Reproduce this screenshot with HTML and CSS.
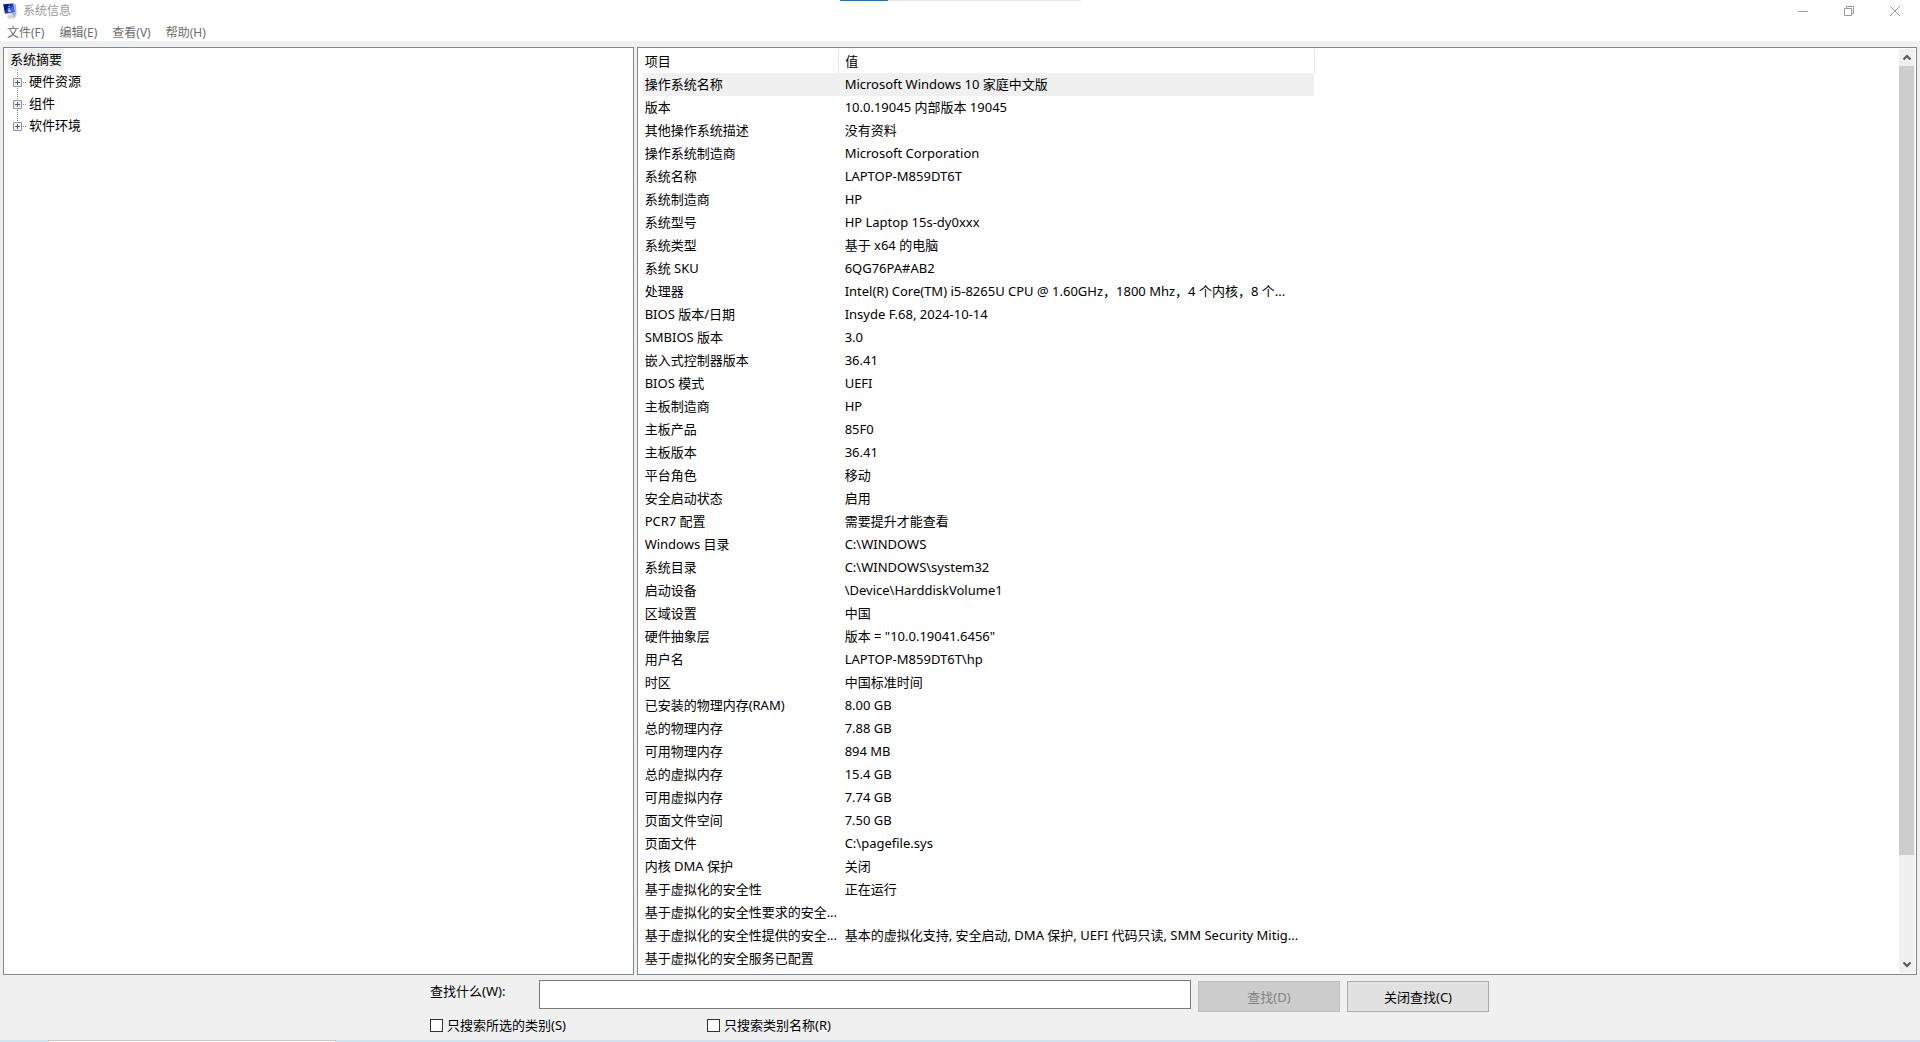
FILE: index.html
```html
<!DOCTYPE html>
<html lang="zh-CN">
<head>
<meta charset="utf-8">
<title>系统信息</title>
<link rel="stylesheet" href="styles.css">
</head>
<body>
<div class="window">
  <div class="progress"><span class="progress-fill"></span></div>
  <header class="titlebar">
    <svg class="app-icon" width="15" height="16" viewBox="0 0 15 16" aria-hidden="true">
      <path d="M5 12 L10 11 L13 13 L12 15 L6 16 L4 14 Z" fill="#d3d5da"/>
      <path d="M10 0.500 L13 1.500 L13.500 11 L11.500 14 L9 11 Z" fill="#a3b0d8"/>
      <path d="M0 1 L11 0 L12.500 10 L2 11.500 Z" fill="#b9c3e2"/>
      <path d="M0.500 1.500 L10 0.500 L11.500 9 L2 10.500 Z" fill="#2038b8"/>
      <path d="M0.500 1.500 L6 1 L4 6 L1.500 8 Z" fill="#0b1a78"/>
      <path d="M8 4 L11 3 L11.500 9 L5 10 Z" fill="#3f6ae0"/>
      <path d="M6 3v1M6 5v3M5 8h3" stroke="#e8efff" stroke-width="1" fill="none"/>
    </svg>
    <h1 class="title">系统信息</h1>
    <div class="caption-buttons">
      <button class="caption" aria-label="最小化"><svg width="12" height="12" viewBox="0 0 12 12"><path d="M1 6.500H11" stroke="#999" fill="none"/></svg></button>
      <button class="caption" aria-label="向下还原"><svg width="12" height="12" viewBox="0 0 12 12"><path d="M1.500 3.500H8.500V10.500H1.500ZM3.500 3V1.500H10.500V8.500H9" stroke="#999" fill="none"/></svg></button>
      <button class="caption" aria-label="关闭"><svg width="12" height="12" viewBox="0 0 12 12"><path d="M1 1L11 11M11 1L1 11" stroke="#999" fill="none"/></svg></button>
    </div>
  </header>
  <nav class="menubar">
    <button class="menu">文件(F)</button>
    <button class="menu">编辑(E)</button>
    <button class="menu">查看(V)</button>
    <button class="menu">帮助(H)</button>
  </nav>
  <main class="panes">
    <section class="pane tree-pane">
      <div class="tree-root">系统摘要</div>
      <ul class="tree">
        <li class="node"><button class="expander" aria-label="展开硬件资源"></button>硬件资源</li>
        <li class="node"><button class="expander" aria-label="展开组件"></button>组件</li>
        <li class="node"><button class="expander" aria-label="展开软件环境"></button>软件环境</li>
      </ul>
    </section>
    <section class="pane list-pane">
      <div class="list-area">
        <table class="list">
          <colgroup><col class="col-item"><col class="col-value"></colgroup>
          <thead><tr><th>项目</th><th>值</th></tr></thead>
          <tbody>
            <tr class="selected"><td>操作系统名称</td><td>Microsoft Windows 10 家庭中文版</td></tr>
            <tr><td>版本</td><td>10.0.19045 内部版本 19045</td></tr>
            <tr><td>其他操作系统描述</td><td>没有资料</td></tr>
            <tr><td>操作系统制造商</td><td>Microsoft Corporation</td></tr>
            <tr><td>系统名称</td><td>LAPTOP-M859DT6T</td></tr>
            <tr><td>系统制造商</td><td>HP</td></tr>
            <tr><td>系统型号</td><td>HP Laptop 15s-dy0xxx</td></tr>
            <tr><td>系统类型</td><td>基于 x64 的电脑</td></tr>
            <tr><td>系统 SKU</td><td>6QG76PA#AB2</td></tr>
            <tr><td>处理器</td><td>Intel(R) Core(TM) i5-8265U CPU @ 1.60GHz，1800 Mhz，4 个内核，8 个...</td></tr>
            <tr><td>BIOS 版本/日期</td><td>Insyde F.68, 2024-10-14</td></tr>
            <tr><td>SMBIOS 版本</td><td>3.0</td></tr>
            <tr><td>嵌入式控制器版本</td><td>36.41</td></tr>
            <tr><td>BIOS 模式</td><td>UEFI</td></tr>
            <tr><td>主板制造商</td><td>HP</td></tr>
            <tr><td>主板产品</td><td>85F0</td></tr>
            <tr><td>主板版本</td><td>36.41</td></tr>
            <tr><td>平台角色</td><td>移动</td></tr>
            <tr><td>安全启动状态</td><td>启用</td></tr>
            <tr><td>PCR7 配置</td><td>需要提升才能查看</td></tr>
            <tr><td>Windows 目录</td><td>C:\WINDOWS</td></tr>
            <tr><td>系统目录</td><td>C:\WINDOWS\system32</td></tr>
            <tr><td>启动设备</td><td>\Device\HarddiskVolume1</td></tr>
            <tr><td>区域设置</td><td>中国</td></tr>
            <tr><td>硬件抽象层</td><td>版本 = "10.0.19041.6456"</td></tr>
            <tr><td>用户名</td><td>LAPTOP-M859DT6T\hp</td></tr>
            <tr><td>时区</td><td>中国标准时间</td></tr>
            <tr><td>已安装的物理内存(RAM)</td><td>8.00 GB</td></tr>
            <tr><td>总的物理内存</td><td>7.88 GB</td></tr>
            <tr><td>可用物理内存</td><td>894 MB</td></tr>
            <tr><td>总的虚拟内存</td><td>15.4 GB</td></tr>
            <tr><td>可用虚拟内存</td><td>7.74 GB</td></tr>
            <tr><td>页面文件空间</td><td>7.50 GB</td></tr>
            <tr><td>页面文件</td><td>C:\pagefile.sys</td></tr>
            <tr><td>内核 DMA 保护</td><td>关闭</td></tr>
            <tr><td>基于虚拟化的安全性</td><td>正在运行</td></tr>
            <tr><td>基于虚拟化的安全性要求的安全...</td><td></td></tr>
            <tr><td>基于虚拟化的安全性提供的安全...</td><td>基本的虚拟化支持, 安全启动, DMA 保护, UEFI 代码只读, SMM Security Mitig...</td></tr>
            <tr><td>基于虚拟化的安全服务已配置</td><td></td></tr>
          </tbody>
        </table>
      </div>
      <div class="scrollbar">
        <button class="scroll-arrow" aria-label="向上滚动"><svg width="8" height="7" viewBox="0 0 8 7"><path d="M0.500 5.500L4 2L7.500 5.500" fill="none" stroke="#555" stroke-width="2"/></svg></button>
        <div class="thumb"></div>
        <div class="track"></div>
        <button class="scroll-arrow" aria-label="向下滚动"><svg width="8" height="7" viewBox="0 0 8 7"><path d="M0.500 1.500L4 5L7.500 1.500" fill="none" stroke="#555" stroke-width="2"/></svg></button>
      </div>
    </section>
  </main>
  <form class="find">
    <div class="find-row">
      <label class="find-label" for="what">查找什么(W):</label>
      <input class="find-input" id="what" type="text">
      <button class="push" type="button" disabled>查找(D)</button>
      <button class="push" type="button">关闭查找(C)</button>
    </div>
    <div class="option-row">
      <label class="option"><input class="check" type="checkbox">只搜索所选的类别(S)</label>
      <label class="option"><input class="check" type="checkbox">只搜索类别名称(R)</label>
    </div>
  </form>
  <footer class="edge"><span class="edge-tab"></span></footer>
</div>
</body>
</html>
```
FILE: styles.css
```css
* {
  box-sizing: border-box;
}

body {
  margin: 0;
  background: #f0f0f0;
  color: #000;
  font: 13px/22px "Noto Sans", "Noto Sans CJK SC", sans-serif;
}

button {
  margin: 0;
  padding: 0;
  border: 0;
  background: none;
  font: inherit;
  color: inherit;
}

.window {
  position: relative;
  display: flex;
  flex-direction: column;
  min-height: 100vh;
}

/* loading line laid over the top edge of the title bar */
.progress {
  position: absolute;
  top: 0;
  left: 50%;
  width: 241px;
  height: 1px;
  margin-left: -120px;
  background: #e5e5e5;
}

.progress-fill {
  display: block;
  width: 20%;
  height: 1px;
  background: #0078d7;
}

.titlebar {
  display: flex;
  align-items: center;
  height: 22px;
  padding: 0 2px 0 3px;
  background: #fff;
}

.app-icon {
  margin-right: 5px;
}

.title {
  flex: 1;
  margin: 0;
  font-size: 12px;
  font-weight: 400;
  color: #999;
}

.caption-buttons {
  display: flex;
}

.caption {
  display: flex;
  align-items: center;
  justify-content: center;
  width: 46px;
  height: 20px;
}

.menubar {
  display: flex;
  gap: 15px;
  height: 19px;
  padding-left: 7px;
  background: #fff;
  font-size: 12px;
  line-height: 20px;
  color: #6d6d6d;
}

.menu {
  height: 22px;
}

.panes {
  flex: 1;
  display: grid;
  grid-template-columns: 33fr 67fr;
  gap: 3px;
  padding: 6px 3px 0;
}

.pane {
  min-width: 0;
  border: 1px solid #828790;
  background: #fff;
}

.tree-pane {
  padding: 1px 4px;
}

.list-pane {
  display: flex;
  padding: 1px 1px 1px 2px;
}

.tree-root {
  width: 56px;
  padding-left: 2px;
  background: #f0f0f0;
  line-height: 21px;
}

.tree {
  margin: 0;
  padding: 0 0 0 5px;
  list-style: none;
}

.node {
  display: flex;
  align-items: center;
  height: 22px;
  background:
    repeating-linear-gradient(to bottom, #808080 0 1px, transparent 1px 2px) 4px 0 / 1px 100% no-repeat,
    repeating-linear-gradient(to right, #808080 0 1px, transparent 1px 2px) 10px 12px / 3px 1px no-repeat;
}

.node:last-child {
  background-size: 1px 50%, 3px 1px;
}

.expander {
  width: 9px;
  height: 9px;
  margin: 2px 7px 0 0;
  border: 1px solid #919191;
  border-radius: 1px;
  background:
    linear-gradient(#3c5a9c, #3c5a9c) center / 5px 1px no-repeat,
    linear-gradient(#3c5a9c, #3c5a9c) center / 1px 5px no-repeat,
    #f4f4f4;
}

.list-area {
  flex: 1;
  min-width: 0;
  overflow: hidden;
}

.list {
  width: 675px;
  border-collapse: collapse;
  table-layout: fixed;
}

.col-item {
  width: 199px;
}

.list th,
.list td {
  height: 23px;
  padding: 0 0 1px 5px;
  overflow: hidden;
  text-align: left;
  font-weight: 400;
  white-space: nowrap;
}

.list th {
  height: 24px;
  border-right: 1px solid #e5e5e5;
}

.list th + th,
.list td + td {
  padding-left: 6px;
}

.selected {
  background: linear-gradient(#f0f0f0, #f0f0f0) 3px 0 no-repeat;
}

.scrollbar {
  display: flex;
  flex-direction: column;
  width: 16px;
  border-right: 1px solid #f0f0f0;
  background: #f0f0f0;
}

.scroll-arrow {
  display: flex;
  align-items: center;
  justify-content: center;
  height: 17px;
}

.thumb {
  flex: 789;
  background: #cdcdcd;
}

.track {
  flex: 101;
}

.find {
  width: 100%;
  max-width: 1060px;
  margin: 0 auto;
  padding: 5px 1px 0 0;
}

.find-row {
  display: flex;
  align-items: flex-start;
}

.find-label {
  width: 109px;
}

.find-input {
  flex: 1;
  min-width: 0;
  height: 29px;
  padding: 0 4px;
  border: 1px solid #7a7a7a;
  background: #fff;
  font: inherit;
}

.push {
  width: 142px;
  height: 31px;
  margin: 1px 0 0 7px;
  border: 1px solid #adadad;
  background: #e1e1e1;
}

.push:disabled {
  border-color: #bfbfbf;
  background: #ccc;
  color: #838383;
}

.option-row {
  display: flex;
  height: 28px;
  padding-top: 2px;
}

.option {
  display: flex;
  align-items: center;
  gap: 4px;
  width: 277px;
  height: 22px;
}

.check {
  appearance: none;
  width: 13px;
  height: 13px;
  margin: 0;
  border: 1px solid #333;
  background: #fff;
}

.edge {
  height: 2px;
  padding-left: 48px;
  background: linear-gradient(to right, #cfe6ee, #d3dcea);
}

.edge-tab {
  display: block;
  width: 288px;
  height: 2px;
  border: 1px solid #c8c8c8;
  border-bottom-color: #fff;
}
```
